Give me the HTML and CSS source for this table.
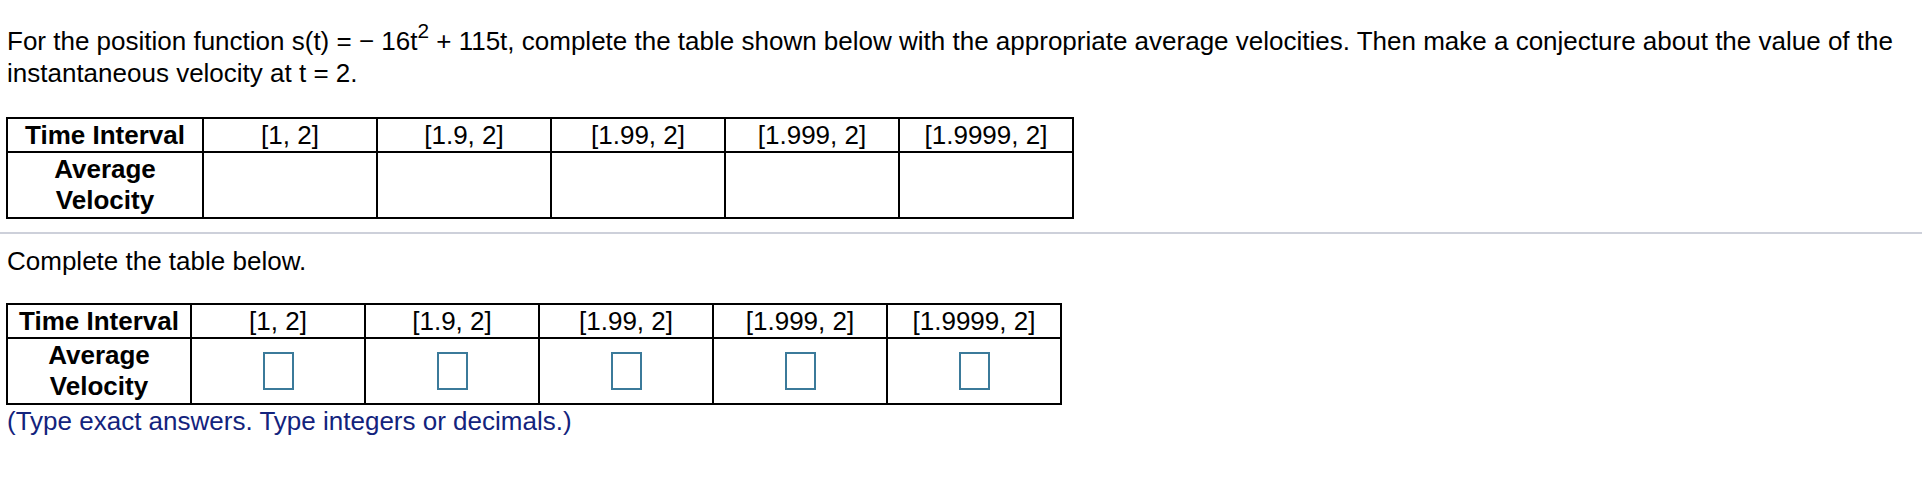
FILE: index.html
```html
<!DOCTYPE html>
<html lang="en">
<head>
<meta charset="utf-8">
<title>Average velocity</title>
<link rel="stylesheet" href="styles.css">
</head>
<body>
<div class="question">
  <p class="prompt">For the position function s(t) = − 16t<sup class="sup">2</sup> + 115t, complete the table shown below with the appropriate average velocities. Then make a conjecture about the value of the instantaneous velocity at t = 2.</p>
  <table class="vtable vtable-top">
    <colgroup><col class="c-head"><col class="c"><col class="c"><col class="c"><col class="c"><col class="c"></colgroup>
    <tr class="r1"><th>Time Interval</th><td>[1, 2]</td><td>[1.9, 2]</td><td>[1.99, 2]</td><td>[1.999, 2]</td><td>[1.9999, 2]</td></tr>
    <tr class="r2"><th>Average<br>Velocity</th><td></td><td></td><td></td><td></td><td></td></tr>
  </table>
</div>
<hr class="sep">
<div class="answer">
  <p class="prompt2">Complete the table below.</p>
  <table class="vtable vtable-ans">
    <colgroup><col class="c-head2"><col class="c"><col class="c"><col class="c"><col class="c"><col class="c"></colgroup>
    <tr class="r1"><th>Time Interval</th><td>[1, 2]</td><td>[1.9, 2]</td><td>[1.99, 2]</td><td>[1.999, 2]</td><td>[1.9999, 2]</td></tr>
    <tr class="r2"><th>Average<br>Velocity</th><td><span class="box"></span></td><td><span class="box"></span></td><td><span class="box"></span></td><td><span class="box"></span></td><td><span class="box"></span></td></tr>
  </table>
  <p class="hint">(Type exact answers. Type integers or decimals.)</p>
</div>
</body>
</html>
```
FILE: styles.css
```css
html, body {
  margin: 0;
  padding: 0;
  background: #fff;
}
body {
  font-family: "Liberation Sans", Arial, sans-serif;
  font-size: 26px;
  color: #000;
}
.question, .answer {
  padding-left: 6px;
}
.prompt {
  margin: 25px 0 0 1px;
  line-height: 32px;
}
.sup {
  font-size: 0.8em;
  line-height: 0;
  vertical-align: 0.6em;
}
.vtable {
  border-collapse: collapse;
  table-layout: fixed;
  margin-top: 28px;
}
.vtable-top { width: 1066px; }
.vtable-ans { width: 1054px; margin-top: 26px; }
.c-head { width: 196px; }
.c-head2 { width: 184px; }
.c { width: 174px; }
.vtable th, .vtable td {
  border: 2px solid #000;
  padding: 0 3px;
  text-align: center;
  line-height: 31px;
  vertical-align: middle;
  white-space: nowrap;
}
.vtable th { font-weight: bold; }
.r1 th, .r1 td { height: 32px; }
.r2 th, .r2 td { height: 64px; }
.sep {
  margin: 13px 0 0 0;
  border: 0;
  height: 2px;
  background: #cdd0da;
}
.prompt2 {
  margin: 11px 0 0 1px;
  line-height: 32px;
}
.box {
  display: inline-block;
  width: 27px;
  height: 34px;
  border: 2px solid #3b7a9a;
  vertical-align: middle;
}
.hint {
  margin: 0 0 0 1px;
  line-height: 32px;
  color: #13237d;
}
```
